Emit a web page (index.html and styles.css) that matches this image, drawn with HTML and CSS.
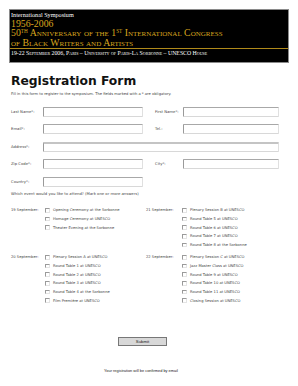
FILE: index.html
```html
<!DOCTYPE html>
<html>
<head>
<meta charset="utf-8">
<title>Registration Form</title>
<link rel="stylesheet" href="styles.css">
</head>
<body>
<div class="page">
  <div class="banner">
    <div class="b-small">International Symposium</div>
    <div class="b-years">1956-2006</div>
    <div class="b-title">50<sup>th</sup> Anniversary of the 1<sup>st</sup> International Congress</div>
    <div class="b-title">of Black Writers and Artists</div>
    <div class="b-rule"></div>
    <div class="b-date">19-22 September 2006, Paris – University of Paris-La Sorbonne – UNESCO House</div>
  </div>

  <div class="content">
    <h1 class="title">Registration Form</h1>
    <p class="intro">Fill in this form to register to the symposium. The fields marked with a * are obligatory.</p>

    <div class="fields">
      <div class="row">
        <span class="lbl">Last Name*:</span><span class="inp short"></span>
        <span class="lbl2">First Name*:</span><span class="inp right"></span>
      </div>
      <div class="row">
        <span class="lbl">Email*:</span><span class="inp short"></span>
        <span class="lbl2">Tel.:</span><span class="inp right"></span>
      </div>
      <div class="row">
        <span class="lbl">Address*:</span><span class="inp long"></span>
      </div>
      <div class="row">
        <span class="lbl">Zip Code*:</span><span class="inp short"></span>
        <span class="lbl2">City*:</span><span class="inp right"></span>
      </div>
      <div class="row">
        <span class="lbl">Country*:</span><span class="inp short"></span>
      </div>
    </div>

    <p class="question">Which event would you like to attend? (Mark one or more answers)</p>

    <div class="group">
      <div class="col left">
        <span class="date">19 September:</span>
        <ul class="list">
          <li><span class="cb"></span>Opening Ceremony at the Sorbonne</li>
          <li><span class="cb"></span>Homage Ceremony at UNESCO</li>
          <li><span class="cb"></span>Theater Evening at the Sorbonne</li>
        </ul>
      </div>
      <div class="col">
        <span class="date">21 September:</span>
        <ul class="list">
          <li><span class="cb"></span>Plenary Session B at UNESCO</li>
          <li><span class="cb"></span>Round Table 5 at UNESCO</li>
          <li><span class="cb"></span>Round Table 6 at UNESCO</li>
          <li><span class="cb"></span>Round Table 7 at UNESCO</li>
          <li><span class="cb"></span>Round Table 8 at the Sorbonne</li>
        </ul>
      </div>
    </div>

    <div class="group second">
      <div class="col left">
        <span class="date">20 September:</span>
        <ul class="list">
          <li><span class="cb"></span>Plenary Session A at UNESCO</li>
          <li><span class="cb"></span>Round Table 1 at UNESCO</li>
          <li><span class="cb"></span>Round Table 2 at UNESCO</li>
          <li><span class="cb"></span>Round Table 3 at UNESCO</li>
          <li><span class="cb"></span>Round Table 4 at the Sorbonne</li>
          <li><span class="cb"></span>Film Première at UNESCO</li>
        </ul>
      </div>
      <div class="col">
        <span class="date">22 September:</span>
        <ul class="list">
          <li><span class="cb"></span>Plenary Session C at UNESCO</li>
          <li><span class="cb"></span>Jazz Master Class at UNESCO</li>
          <li><span class="cb"></span>Round Table 9 at UNESCO</li>
          <li><span class="cb"></span>Round Table 10 at UNESCO</li>
          <li><span class="cb"></span>Round Table 11 at UNESCO</li>
          <li><span class="cb"></span>Closing Session at UNESCO</li>
        </ul>
      </div>
    </div>

    <div class="actions">
      <span class="submit">Submit</span>
    </div>
    <p class="footer">Your registration will be confirmed by email</p>
  </div>
</div>
</body>
</html>
```

FILE: styles.css
```css
html, body {
  margin: 0;
  padding: 0;
  background: #ffffff;
}

.page {
  width: 298px;
  height: 386px;
  padding-top: 9px;
  box-sizing: border-box;
  font-family: "DejaVu Sans", Verdana, sans-serif;
  color: #3a3a3a;
}

/* ---------- banner ---------- */
.banner {
  margin: 0 9px;
  height: 54px;
  box-sizing: border-box;
  background: #000;
  border: 1px solid #8a8a8a;
  padding-left: 1px;
  font-family: "Liberation Serif", "Times New Roman", serif;
  overflow: hidden;
}

.b-small {
  height: 9.5px;
  line-height: 9.5px;
  font-size: 6.2px;
  color: #ffffff;
}

.b-years {
  height: 8.5px;
  line-height: 8.5px;
  font-size: 9.8px;
  color: #d9a61e;
}

.b-title {
  height: 10px;
  line-height: 10px;
  font-size: 9.8px;
  color: #d9a61e;
  font-variant: small-caps;
  white-space: nowrap;
}

.b-title sup {
  font-size: 5.2px;
  vertical-align: 3px;
  line-height: 0;
  text-transform: uppercase;
}

.b-rule {
  height: 1px;
  background: #b08a1a;
  margin: 0 -2px 0 -2px;
}

.b-date {
  height: 9px;
  line-height: 9px;
  font-size: 5.8px;
  color: #ffffff;
  font-variant: small-caps;
  white-space: nowrap;
}

/* ---------- content ---------- */
.content {
  padding: 0 11px;
}

.title {
  margin: 11px 0 0 0;
  height: 14px;
  line-height: 14px;
  font-size: 12.3px;
  font-weight: bold;
  color: #111;
}

.intro {
  margin: 3px 0 0 0;
  height: 6px;
  line-height: 6px;
  font-size: 3.7px;
  color: #444;
}

.fields {
  margin-top: 9.7px;
  display: flex;
  flex-direction: column;
  gap: 7.5px;
}

.row {
  display: flex;
  align-items: center;
  height: 10px;
}

.lbl {
  width: 32px;
  font-size: 3.8px;
  line-height: 10px;
  color: #444;
}

.lbl2 {
  width: 28px;
  margin-left: 12px;
  font-size: 3.8px;
  line-height: 10px;
  color: #444;
}

.inp {
  display: block;
  height: 10px;
  box-sizing: border-box;
  border-top: 1px solid #a8a8a8;
  border-left: 1px solid #9a9a9a;
  border-right: 1px solid #e0e0e0;
  border-bottom: 1px solid #d8d8d8;
  border-radius: 1px;
  background: #fff;
}

.inp.short { width: 100px; }
.inp.right { width: 96px; }
.inp.long {
  width: 236px;
  border-top: 2px solid #c4c4c4;
}

.question {
  margin: 4px 0 0 0;
  height: 6px;
  line-height: 6px;
  font-size: 3.8px;
  color: #444;
}

/* ---------- events ---------- */
.group {
  display: flex;
  margin-top: 9.3px;
}

.group.second {
  margin-top: 3.5px;
}

.col {
  display: flex;
}

.col.left {
  width: 135px;
}

.date {
  width: 34px;
  font-size: 3.7px;
  line-height: 8.7px;
  height: 8.7px;
  color: #444;
}

.col:not(.left) .date {
  width: 36px;
}

.list {
  list-style: none;
  margin: 0;
  padding: 0;
}

.list li {
  display: flex;
  align-items: center;
  height: 8.7px;
  font-size: 3.7px;
  color: #444;
  white-space: nowrap;
}

.cb {
  display: block;
  width: 4.5px;
  height: 4.5px;
  box-sizing: border-box;
  border-top: 1px solid #9a9a9a;
  border-left: 1px solid #9a9a9a;
  border-right: 1px solid #e4e4e4;
  border-bottom: 1px solid #e4e4e4;
  margin-right: 3.5px;
}

/* ---------- submit ---------- */
.actions {
  margin-top: 31.5px;
  display: flex;
  padding-left: 107px;
}

.submit {
  display: block;
  width: 49px;
  height: 9.5px;
  box-sizing: border-box;
  background: #d8d8d8;
  border: 1px solid #777;
  text-align: center;
  font-family: "Liberation Sans", Arial, sans-serif;
  font-size: 4.3px;
  line-height: 7.5px;
  color: #222;
}

.footer {
  margin: 22px 0 0 0;
  height: 6px;
  line-height: 6px;
  text-align: center;
  padding-right: 16px;
  font-family: "Liberation Sans", Arial, sans-serif;
  font-size: 3.9px;
  color: #222;
}
```
